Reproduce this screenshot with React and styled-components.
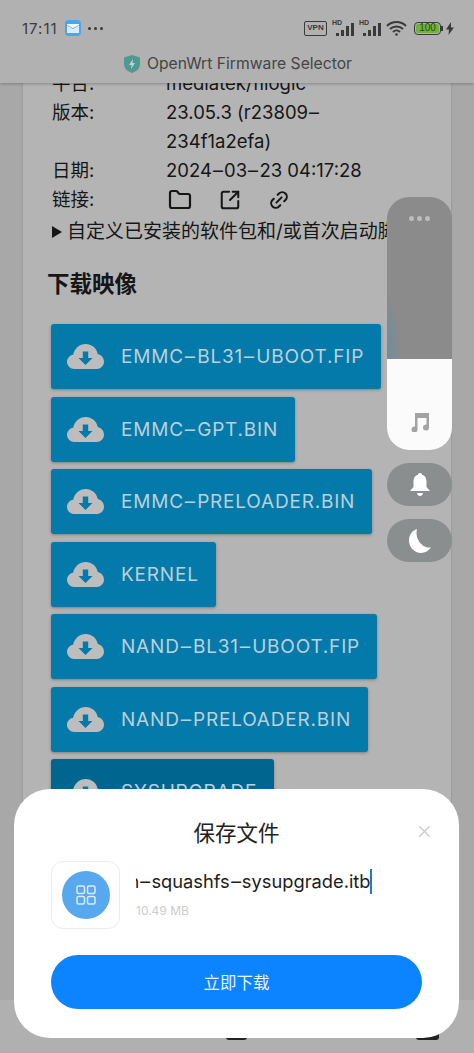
import React from 'react';
import styled, { createGlobalStyle } from 'styled-components';
import { Folder, SquareArrowOutUpRight, Link2, X } from 'lucide-react';

const FONT = `Inter, "Noto Sans CJK SC", sans-serif`;

const GlobalStyle = createGlobalStyle`
  html, body {
    margin: 0;
    padding: 0;
    background: #a8a8a8;
  }
  * {
    box-sizing: border-box;
  }
`;

const FILES = [
  'EMMC-BL31-UBOOT.FIP',
  'EMMC-GPT.BIN',
  'EMMC-PRELOADER.BIN',
  'KERNEL',
  'NAND-BL31-UBOOT.FIP',
  'NAND-PRELOADER.BIN',
  'SYSUPGRADE',
];

// the reference's font has much longer hyphens than Inter
const Dashed = ({ text }) =>
  text.split('-').map((part, i) => (
    <React.Fragment key={i}>
      {i > 0 && <Dash>-</Dash>}
      {part}
    </React.Fragment>
  ));

const CloudIcon = () => (
  <svg width="37" height="25" viewBox="0 0 37 25">
    <path
      fill="#bdbdbd"
      d="M7.500 25C3.300 25 0 21.800 0 17.800 0 14.200 2.700 11.300 6.200 10.700 7.300 4.600 12.500 0 18.700 0 24.700 0 29.700 4.300 30.800 10 34.300 10.800 37 14 37 17.800 37 21.800 33.700 25 29.500 25Z"
    />
    <path fill="#047aaa" d="M15.800 7.500h5.400v6.500h4.300L18.500 21 11.500 14h4.300Z" />
  </svg>
);

const App = () => (
  <Screen>
    <GlobalStyle />
    <TopBar>
      <StatusBar>
        <StatusLeft>
          <Clock>17:11</Clock>
          <MailBadge>
            <svg width="12" height="9" viewBox="0 0 12 9">
              <path fill="#dcebf8" d="M0 1.500 6 5l6-3.500V9H0Z" />
              <path fill="#f2f7fc" d="M0 0h12v1L6 4.200 0 1Z" />
            </svg>
          </MailBadge>
          <Dots>
            <Dot />
            <Dot />
            <Dot />
          </Dots>
        </StatusLeft>
        <StatusRight>
          <VpnTag>VPN</VpnTag>
          <Signal label="HD" />
          <Signal label="HD" />
          <svg width="21" height="16" viewBox="0 0 21 16" fill="none" stroke="#3a3a3a" strokeWidth="2">
            <path d="M1 6a13.500 13.500 0 0 1 19 0" />
            <path d="M4 9a9.500 9.500 0 0 1 13 0" />
            <path d="M7 12a5 5 0 0 1 7 0" />
            <circle cx="10.500" cy="14.500" r="1.300" fill="#3a3a3a" stroke="none" />
          </svg>
          <Battery>
            <BatteryFill>100</BatteryFill>
          </Battery>
          <BatteryTip />
          <svg width="8" height="13" viewBox="0 0 8 13">
            <path fill="#3a3a3a" d="M5 0 0 7.500h3L2.500 13 8 5.500H5Z" />
          </svg>
        </StatusRight>
      </StatusBar>
      <TitleRow>
        <svg width="16" height="18" viewBox="0 0 16 18">
          <path fill="#4f9a8e" d="M8 0 16 2.500V9c0 4.500-3.500 7.500-8 9-4.500-1.500-8-4.500-8-9V2.500Z" />
          <path fill="#b9d6d0" d="M9 4 5 10h2.500L7 14l4-6H8.500Z" />
        </svg>
        <TitleText>OpenWrt Firmware Selector</TitleText>
      </TitleRow>
    </TopBar>

    <Card>
      <InfoGrid>
        <Label>平台:</Label>
        <Value>mediatek/filogic</Value>
        <Label>版本:</Label>
        <Value>
          23.05.3 (r23809<Dash>-</Dash>
          <br />
          234f1a2efa)
        </Value>
        <Label>日期:</Label>
        <Value>
          <Dashed text="2024-03-23 04:17:28" />
        </Value>
        <Label>链接:</Label>
        <LinkIcons>
          <Folder size={24} strokeWidth={2.2} />
          <SquareArrowOutUpRight size={22} strokeWidth={2.2} />
          <Link2 size={22} strokeWidth={2.2} style={{ transform: 'rotate(-45deg)' }} />
        </LinkIcons>
      </InfoGrid>
      <Disclosure>
        <Arrow />
        自定义已安装的软件包和/或首次启动脚本
      </Disclosure>
      <Heading>下载映像</Heading>
      <FileList>
        {FILES.map((name, i) => (
          <FileButton key={name} $dim={i === FILES.length - 1}>
            <CloudIcon />
            <span>
              <Dashed text={name} />
            </span>
          </FileButton>
        ))}
      </FileList>
    </Card>

    <VolumePanel>
      <VolumeSlider>
        <VolumeDots>
          <VolumeDot />
          <VolumeDot />
          <VolumeDot />
        </VolumeDots>
        <VolumeLevel>
          <svg width="20" height="20" viewBox="0 0 20 20">
            <path
              fill="#a3a3a3"
              d="M5 1h14v14.500a3 3 0 1 1-2.500-3V6H7.500v11.500a3 3 0 1 1-2.500-3Z"
            />
          </svg>
        </VolumeLevel>
      </VolumeSlider>
      <RoundToggle>
        <svg width="22" height="23" viewBox="0 0 22 23">
          <path fill="#fff" d="M11 0c1.200 0 2 .8 2 1.800C16.500 2.800 17.500 5.800 17.500 9v5l3.500 4H1l3.500-4V9c0-3.200 1-6.200 4.500-7.200C9 .8 9.800 0 11 0ZM8 20h6c0 1.500-1.300 3-3 3s-3-1.500-3-3Z" />
        </svg>
      </RoundToggle>
      <RoundToggle>
        <svg width="22" height="24" viewBox="0 0 22 24">
          <path fill="#fff" d="M8 0C3.300 1.500 0 6 0 11.500 0 18.400 5.500 24 12 24c4.200 0 7.900-2.300 10-5.700C13.500 20 5.500 10 8 0Z" />
        </svg>
      </RoundToggle>
    </VolumePanel>

    <NavStrip>
      <NavMark $w={22} $h={8} />
      <NavMark $w={24} $h={12} />
    </NavStrip>

    <Dialog>
      <DialogHeader>
        <DialogTitle>保存文件</DialogTitle>
        <CloseButton>
          <X size={19} strokeWidth={1.6} />
        </CloseButton>
      </DialogHeader>
      <FileRow>
        <AppTile>
          <AppCircle>
            <svg width="20" height="20" viewBox="0 0 20 20" fill="none" stroke="#dcecfb" strokeWidth="1.500">
              <rect x="1" y="1" width="7.500" height="7.500" rx="1.500" />
              <rect x="11.500" y="1" width="7.500" height="7.500" rx="1.500" />
              <rect x="1" y="11.500" width="7.500" height="7.500" rx="1.500" />
              <rect x="11.500" y="11.500" width="7.500" height="7.500" rx="1.500" />
            </svg>
          </AppCircle>
        </AppTile>
        <FileMeta>
          <FileNameBox>
            <FileName>
              <Dashed text="openwrt-n-squashfs-sysupgrade.itb" />
            </FileName>
            <Caret />
          </FileNameBox>
          <FileSize>10.49 MB</FileSize>
        </FileMeta>
      </FileRow>
      <DownloadButton>立即下载</DownloadButton>
    </Dialog>
  </Screen>
);

const Signal = ({ label }) => (
  <SignalWrap>
    <SignalLabel>{label}</SignalLabel>
    <SignalBars>
      <SignalBar $h={3} />
      <SignalBar $h={6} />
      <SignalBar $h={10} />
      <SignalBar $h={13} />
    </SignalBars>
  </SignalWrap>
);

const Screen = styled.div`
  position: relative;
  width: 474px;
  height: 1053px;
  overflow: hidden;
  background: #a8a8a8;
  font-family: ${FONT};
  color: #161616;
`;

const Dash = styled.span`
  display: inline-block;
  padding: 0 0.1em;
  transform: scaleX(1.7);
`;

const TopBar = styled.header`
  position: relative;
  z-index: 2;
  height: 83px;
  background: #b1b1b1;
  box-shadow: 0 1px 3px rgba(0, 0, 0, 0.25);
  padding: 17px 20px 0 22px;
`;

const StatusBar = styled.div`
  display: flex;
  justify-content: space-between;
  align-items: center;
  height: 22px;
`;

const StatusLeft = styled.div`
  display: flex;
  align-items: center;
`;

const Clock = styled.span`
  font-size: 15px;
  letter-spacing: 1px;
  color: #3c3c3c;
`;

const MailBadge = styled.span`
  display: flex;
  align-items: center;
  justify-content: center;
  width: 16px;
  height: 16px;
  margin-left: 7px;
  border-radius: 4px;
  background: #4aa4ee;
`;

const Dots = styled.span`
  display: flex;
  gap: 3px;
  margin-left: 7px;
`;

const Dot = styled.i`
  width: 3px;
  height: 3px;
  border-radius: 50%;
  background: #3a3a3a;
`;

const StatusRight = styled.div`
  display: flex;
  align-items: center;
  gap: 5px;
`;

const VpnTag = styled.span`
  width: 23px;
  height: 15px;
  border: 1.500px solid #3a3a3a;
  border-radius: 2px;
  font: 700 8px/12px "Liberation Sans", sans-serif;
  text-align: center;
  color: #3a3a3a;
`;

const SignalWrap = styled.span`
  position: relative;
  width: 22px;
  height: 16px;
`;

const SignalLabel = styled.span`
  position: absolute;
  left: 0;
  top: -1px;
  font: 700 7px/7px "Liberation Sans", sans-serif;
  color: #3a3a3a;
`;

const SignalBars = styled.span`
  display: flex;
  align-items: flex-end;
  justify-content: flex-end;
  gap: 2px;
  height: 16px;
`;

const SignalBar = styled.i`
  width: 3px;
  height: ${(p) => p.$h}px;
  background: #3a3a3a;
`;

const Battery = styled.span`
  margin-left: 2px;
  width: 27px;
  height: 13px;
  padding: 1px;
  border: 1.500px solid #3a3a3a;
  border-radius: 4px;
`;

const BatteryFill = styled.span`
  display: block;
  height: 100%;
  border-radius: 2px;
  background: #6db33c;
  font: 10px/8px "Liberation Sans", sans-serif;
  text-align: center;
  color: #2d4a1a;
`;

const BatteryTip = styled.i`
  width: 2px;
  height: 5px;
  margin: 0 -2px 0 -5px;
  background: #3a3a3a;
`;

const TitleRow = styled.div`
  display: flex;
  justify-content: center;
  align-items: center;
  gap: 7px;
  margin: 15px 0 0 0;
`;

const TitleText = styled.span`
  font-size: 15.700px;
  color: #454545;
`;

const Card = styled.main`
  width: 428px;
  height: 970px;
  margin: -14px 0 0 23px;
  padding: 0 0 0 29px;
  background: #b4b4b4;
  box-shadow: 0 0 2px rgba(0, 0, 0, 0.2);
  overflow: hidden;
`;

const InfoGrid = styled.div`
  display: grid;
  grid-template-columns: 114px 1fr;
  width: 320px;
  font-size: 18.500px;
  line-height: 29px;
`;

const Label = styled.span``;

const Value = styled.span``;

const LinkIcons = styled.span`
  display: flex;
  align-items: center;
  gap: 27px;
  height: 29px;
  padding-left: 2px;
`;

const Disclosure = styled.div`
  display: flex;
  align-items: center;
  margin-top: 3px;
  font-size: 19px;
  line-height: 30px;
  white-space: nowrap;
`;

const Arrow = styled.i`
  flex: none;
  width: 0;
  height: 0;
  margin-right: 5px;
  border-left: 10px solid #161616;
  border-top: 6px solid transparent;
  border-bottom: 6px solid transparent;
`;

const Heading = styled.h2`
  margin: 23px 0 0 -5px;
  font-size: 22.500px;
  font-weight: 700;
  line-height: 28px;
`;

const FileList = styled.div`
  display: flex;
  flex-direction: column;
  align-items: flex-start;
  gap: 7.500px;
  margin: 26px 0 0 -1px;
`;

const FileButton = styled.div`
  display: flex;
  align-items: center;
  gap: 17px;
  height: 65px;
  padding: 0 17px 0 16px;
  border-radius: 3px;
  background: ${(p) => (p.$dim ? '#01668f' : '#047aaa')};
  box-shadow: 0 1px 3px rgba(0, 0, 0, 0.3);
  font-size: 19px;
  letter-spacing: 0.800px;
  color: #bcd0da;
`;

const VolumePanel = styled.aside`
  position: absolute;
  top: 197px;
  left: 387px;
  z-index: 3;
  display: flex;
  flex-direction: column;
  gap: 13px;
  width: 65px;
`;

const VolumeSlider = styled.div`
  display: flex;
  flex-direction: column;
  height: 253px;
  border-radius: 22px;
  background: radial-gradient(ellipse 14px 50px at 0 150px, #6e8d9b, transparent), #8b8b8b;
  overflow: hidden;
`;

const VolumeDots = styled.div`
  display: flex;
  justify-content: center;
  gap: 3px;
  height: 162px;
  padding-top: 19px;
`;

const VolumeDot = styled.i`
  width: 5px;
  height: 5px;
  border-radius: 50%;
  background: #bcbcbc;
`;

const VolumeLevel = styled.div`
  display: flex;
  flex: 1;
  align-items: flex-end;
  justify-content: center;
  padding-bottom: 18px;
  background: #fbfbfb;
`;

const RoundToggle = styled.div`
  display: flex;
  align-items: center;
  justify-content: center;
  height: 43px;
  border-radius: 22px;
  background: #8b8e8e;
`;

const NavStrip = styled.nav`
  position: absolute;
  left: 0;
  right: 0;
  bottom: 0;
  display: flex;
  align-items: flex-end;
  gap: 169px;
  height: 53px;
  padding: 0 35px 13px 226px;
  background: #b0b0b0;
`;

const NavMark = styled.i`
  width: ${(p) => p.$w}px;
  height: ${(p) => p.$h}px;
  border-radius: 3px;
  background: #222;
`;

const Dialog = styled.section`
  position: absolute;
  left: 14px;
  top: 789px;
  z-index: 4;
  width: 445px;
  height: 249px;
  padding: 0 37px;
  border-radius: 36px;
  background: #fff;
`;

const DialogHeader = styled.div`
  position: relative;
  display: flex;
  justify-content: center;
  align-items: center;
  height: 84px;
  margin-bottom: -12px;
`;

const DialogTitle = styled.h3`
  margin: 0;
  font-size: 21.500px;
  font-weight: 400;
  color: #222;
`;

const CloseButton = styled.span`
  position: absolute;
  top: 33px;
  right: -12px;
  display: flex;
  color: #c8c8c8;
`;

const FileRow = styled.div`
  display: flex;
  align-items: flex-start;
  gap: 16px;
`;

const AppTile = styled.div`
  display: flex;
  align-items: center;
  justify-content: center;
  flex: none;
  width: 69px;
  height: 68px;
  border: 1px solid #ececec;
  border-radius: 12px;
`;

const AppCircle = styled.div`
  display: flex;
  align-items: center;
  justify-content: center;
  width: 48px;
  height: 48px;
  border-radius: 50%;
  background: #57a8ef;
`;

const FileMeta = styled.div`
  min-width: 0;
  padding-top: 7px;
`;

const FileNameBox = styled.div`
  display: flex;
  justify-content: flex-end;
  align-items: center;
  width: 236px;
  height: 26px;
  overflow: hidden;
`;

const FileName = styled.span`
  flex: none;
  margin-right: -1px;
  font-size: 18.300px;
  color: #1d1d1d;
  white-space: nowrap;
`;

const Caret = styled.i`
  flex: none;
  width: 2.500px;
  height: 25px;
  background: #1f78d8;
`;

const FileSize = styled.div`
  margin-top: 9px;
  font-size: 12px;
  color: #cccccc;
`;

const DownloadButton = styled.div`
  display: flex;
  align-items: center;
  justify-content: center;
  height: 54px;
  margin-top: 26px;
  border-radius: 27px;
  background: #0d84ff;
  font-size: 16.500px;
  color: #e6f2ff;
`;

export default App;
